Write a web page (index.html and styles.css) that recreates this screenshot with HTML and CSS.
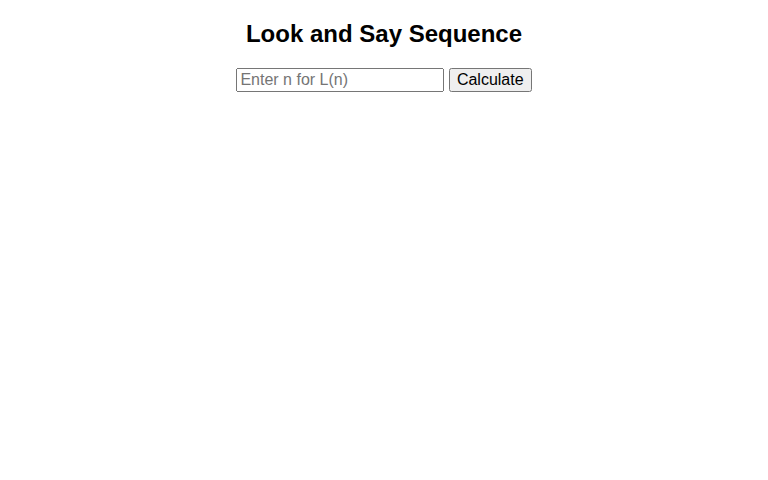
FILE: index.html
```html
<!DOCTYPE html>
<html>
<head>
<meta charset="utf-8">
<title>Look and Say Sequence</title>
<link rel="stylesheet" href="styles.css">
</head>
<body>
<h2 class="title">Look and Say Sequence</h2>
<div class="controls">
<input class="field" type="number" placeholder="Enter n for L(n)"> <button class="calc">Calculate</button>
</div>
<div class="result"></div>
</body>
</html>
```
FILE: styles.css
```css
body {
  font-family: "Liberation Sans", Arial, sans-serif;
  text-align: center;
  background: #fff;
  color: #000;
}
.title {
  font-size: 24px;
  font-weight: bold;
  margin-top: 12px;
  margin-bottom: 19.92px;
}
.field, .calc {
  font-family: "Liberation Sans", Arial, sans-serif;
  font-size: 16px;
}
.field {
  width: 200px;
  box-sizing: content-box;
}
```
